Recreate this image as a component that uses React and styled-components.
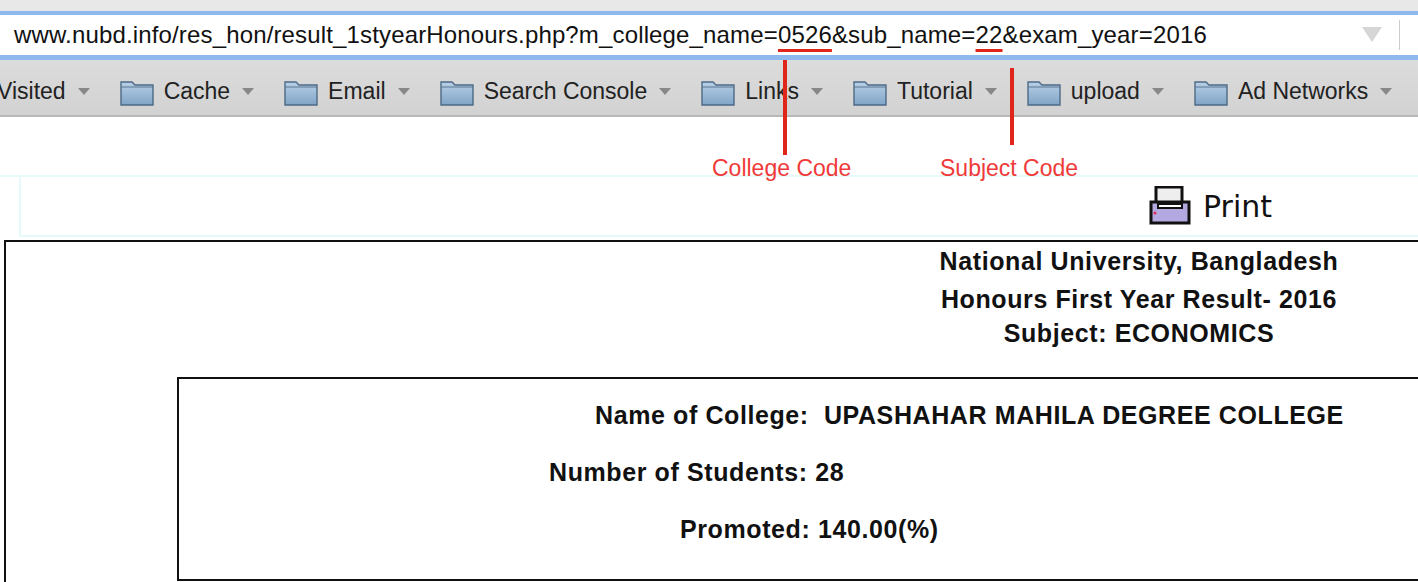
import React from 'react';
import styled, { createGlobalStyle } from 'styled-components';

const Global = createGlobalStyle`
  body { margin: 0; background: #fff; font-family: "Liberation Sans", Arial, sans-serif; overflow: hidden; }
`;

const Page = styled.div`
  position: relative;
  width: 1418px;
  height: 582px;
  overflow: hidden;
`;

const TopStrip = styled.div`
  height: 11px;
  background: #e8e8e8;
`;

const UrlBar = styled.div`
  border-top: 4px solid #8fb8ec;
  border-bottom: 5px solid #8fb8ec;
  background: #fff;
  height: 40px;
  display: flex;
  align-items: center;
  padding-left: 14px;
  font-size: 24px;
  letter-spacing: 0.15px;
  color: #111;
  position: relative;
  white-space: nowrap;
`;

const Mark = styled.span`
  text-decoration: underline;
  text-decoration-color: #e0261b;
  text-decoration-thickness: 3px;
  text-underline-offset: 6px;
`;

const DropTri = styled.span`
  position: absolute;
  right: 36px;
  top: 12px;
  width: 0; height: 0;
  border-left: 10px solid transparent;
  border-right: 10px solid transparent;
  border-top: 15px solid #d6d6d6;
  &::after {
    content: '';
    position: absolute;
    left: 27px; top: -22px;
    width: 1px; height: 30px;
    background: #ccc;
  }
`;

const Bookmarks = styled.div`
  height: 57px;
  box-sizing: border-box;
  padding-top: 8px;
  background: linear-gradient(#dcdcdc, #d2d2d2);
  border-bottom: 2px solid #b8b8b8;
  display: flex;
  align-items: center;
  gap: 30px;
  margin-left: -3px;
  font-size: 23px;
  color: #222;
  white-space: nowrap;
`;

const Mark2 = styled.div`
  display: flex;
  align-items: center;
  gap: 10px;
`;

const Caret = styled.span`
  width: 0; height: 0;
  border-left: 6px solid transparent;
  border-right: 6px solid transparent;
  border-top: 7px solid #888;
  margin-left: 2px;
`;

const Folder = () => (
  <svg width="34" height="28" viewBox="0 0 34 28">
    <defs>
      <linearGradient id="fg" x1="0" y1="0" x2="0" y2="1">
        <stop offset="0" stopColor="#b9d0e6" />
        <stop offset="1" stopColor="#7fa4c6" />
      </linearGradient>
    </defs>
    <path d="M1 4 h11 l3 3 h18 v20 h-32 z" fill="url(#fg)" stroke="#4d6a86" strokeWidth="1.4" />
    <path d="M1 9 h32" stroke="#5a7794" strokeWidth="1" />
  </svg>
);

const Spacer = styled.div`
  height: 58px;
  border-bottom: 2px solid #e6fafa;
`;

const PrintRow = styled.div`
  height: 58px;
  display: flex;
  justify-content: flex-end;
  align-items: center;
  border-left: 2px solid #e6fafa;
  margin-left: 19px;
  padding-right: 146px;
  border-bottom: 2px solid #e6fafa;
`;

const PrintLabel = styled.span`
  font-family: "DejaVu Sans", sans-serif;
  font-size: 30px;
  color: #111;
  margin-left: 12px;
`;

const Outer = styled.div`
  margin: 3px 0 0 4px;
  border: 2px solid #111;
  border-right: none;
  height: 400px;
  padding-top: 0;
  font-weight: bold;
  color: #111;
`;

const Heading = styled.div`
  width: 540px;
  margin-left: 863px;
  text-align: center;
  font-size: 25px;
  letter-spacing: 0.6px;
  line-height: ${p => p.lh}px;
  white-space: nowrap;
`;

const Inner = styled.div`
  margin: 29px 0 0 171px;
  border: 2px solid #111;
  border-right: none;
  height: 200px;
  font-size: 25px;
  letter-spacing: 0.6px;
  white-space: nowrap;
`;

const Line = styled.div`
  padding-left: ${p => p.pl}px;
  margin-top: ${p => p.mt}px;
`;

const Note = styled.div`
  position: absolute;
  left: ${p => p.x}px;
  top: 155px;
  color: #f03a3a;
  font-size: 23px;
`;

const Stick = styled.div`
  position: absolute;
  left: ${p => p.x}px;
  top: ${p => p.y}px;
  width: 4px;
  height: ${p => p.h}px;
  background: #e0261b;
`;

const items = ['Cache', 'Email', 'Search Console', 'Links', 'Tutorial', 'upload', 'Ad Networks', 'o'];

export default function App() {
  return (
    <Page>
      <Global />
      <TopStrip />
      <UrlBar>
        www.nubd.info/res_hon/result_1styearHonours.php?m_college_name=<Mark>0526</Mark>&amp;sub_name=<Mark>22</Mark>&amp;exam_year=2016
        <DropTri />
      </UrlBar>
      <Bookmarks>
        <Mark2>Visited<Caret /></Mark2>
        {items.map((t, i) => (
          <Mark2 key={i}>
            <Folder />
            {t}
            <Caret />
          </Mark2>
        ))}
      </Bookmarks>
      <Spacer />
      <PrintRow>
        <svg width="42" height="40" viewBox="0 0 42 40">
          <rect x="7" y="1" width="26" height="16" fill="#eee" stroke="#111" strokeWidth="3" />
          <rect x="2" y="16" width="38" height="21" fill="#b4a8e0" stroke="#111" strokeWidth="3" />
          <rect x="9" y="18" width="24" height="4" fill="#fff" stroke="#111" strokeWidth="2" />
          <circle cx="6" cy="27" r="1.5" fill="#e02a5a" />
        </svg>
        <PrintLabel>Print</PrintLabel>
      </PrintRow>
      <Outer>
        <Heading lh={38}>National University, Bangladesh</Heading>
        <Heading lh={38}>Honours First Year Result- 2016</Heading>
        <Heading lh={30}>Subject: ECONOMICS</Heading>
        <Inner>
          <Line pl={416} mt={22}>Name of College:&nbsp; UPASHAHAR MAHILA DEGREE COLLEGE</Line>
          <Line pl={370} mt={28}>Number of Students: 28</Line>
          <Line pl={501} mt={28}>Promoted: 140.00(%)</Line>
        </Inner>
      </Outer>
      <Stick x={783} y={60} h={95} />
      <Stick x={1010} y={68} h={77} />
      <Note x={712}>College Code</Note>
      <Note x={940}>Subject Code</Note>
    </Page>
  );
}
